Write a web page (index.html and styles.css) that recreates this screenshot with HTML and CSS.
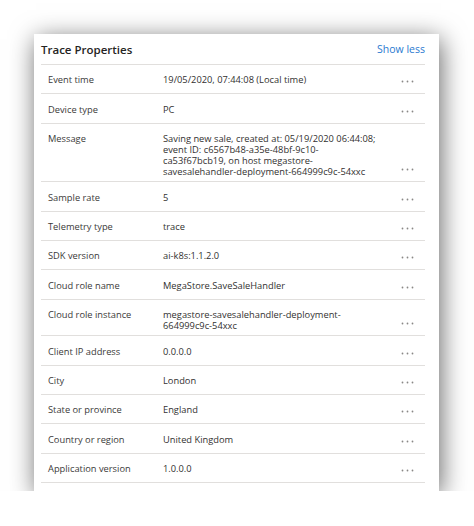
FILE: index.html
```html
<!DOCTYPE html>
<html lang="en">
<head>
<meta charset="utf-8">
<title>Trace Properties</title>
<link rel="stylesheet" href="styles.css">
</head>
<body>
<section class="card">
  <header class="card-head">
    <h2 class="title">Trace Properties</h2>
    <a class="toggle" href="#">Show less</a>
  </header>
  <div class="props">
    <div class="row"><div class="key">Event time</div><div class="val">19/05/2020, 07:44:08 (Local time)</div><button class="more" aria-label="More"><svg width="13" height="3" viewBox="0 0 13 3"><circle cx="1.5" cy="1.5" r="0.9"/><circle cx="6.5" cy="1.5" r="0.9"/><circle cx="11.5" cy="1.5" r="0.9"/></svg></button></div>
    <div class="row"><div class="key">Device type</div><div class="val">PC</div><button class="more" aria-label="More"><svg width="13" height="3" viewBox="0 0 13 3"><circle cx="1.5" cy="1.5" r="0.9"/><circle cx="6.5" cy="1.5" r="0.9"/><circle cx="11.5" cy="1.5" r="0.9"/></svg></button></div>
    <div class="row"><div class="key">Message</div><div class="val">Saving new sale, created at: 05/19/2020 06:44:08; event ID: c6567b48-a35e-48bf-9c10-ca53f67bcb19, on host megastore-savesalehandler-deployment-664999c9c-54xxc</div><button class="more" aria-label="More"><svg width="13" height="3" viewBox="0 0 13 3"><circle cx="1.5" cy="1.5" r="0.9"/><circle cx="6.5" cy="1.5" r="0.9"/><circle cx="11.5" cy="1.5" r="0.9"/></svg></button></div>
    <div class="row"><div class="key">Sample rate</div><div class="val">5</div><button class="more" aria-label="More"><svg width="13" height="3" viewBox="0 0 13 3"><circle cx="1.5" cy="1.5" r="0.9"/><circle cx="6.5" cy="1.5" r="0.9"/><circle cx="11.5" cy="1.5" r="0.9"/></svg></button></div>
    <div class="row"><div class="key">Telemetry type</div><div class="val">trace</div><button class="more" aria-label="More"><svg width="13" height="3" viewBox="0 0 13 3"><circle cx="1.5" cy="1.5" r="0.9"/><circle cx="6.5" cy="1.5" r="0.9"/><circle cx="11.5" cy="1.5" r="0.9"/></svg></button></div>
    <div class="row"><div class="key">SDK version</div><div class="val">ai-k8s:1.1.2.0</div><button class="more" aria-label="More"><svg width="13" height="3" viewBox="0 0 13 3"><circle cx="1.5" cy="1.5" r="0.9"/><circle cx="6.5" cy="1.5" r="0.9"/><circle cx="11.5" cy="1.5" r="0.9"/></svg></button></div>
    <div class="row"><div class="key">Cloud role name</div><div class="val">MegaStore.SaveSaleHandler</div><button class="more" aria-label="More"><svg width="13" height="3" viewBox="0 0 13 3"><circle cx="1.5" cy="1.5" r="0.9"/><circle cx="6.5" cy="1.5" r="0.9"/><circle cx="11.5" cy="1.5" r="0.9"/></svg></button></div>
    <div class="row"><div class="key">Cloud role instance</div><div class="val">megastore-savesalehandler-deployment-664999c9c-54xxc</div><button class="more" aria-label="More"><svg width="13" height="3" viewBox="0 0 13 3"><circle cx="1.5" cy="1.5" r="0.9"/><circle cx="6.5" cy="1.5" r="0.9"/><circle cx="11.5" cy="1.5" r="0.9"/></svg></button></div>
    <div class="row"><div class="key">Client IP address</div><div class="val">0.0.0.0</div><button class="more" aria-label="More"><svg width="13" height="3" viewBox="0 0 13 3"><circle cx="1.5" cy="1.5" r="0.9"/><circle cx="6.5" cy="1.5" r="0.9"/><circle cx="11.5" cy="1.5" r="0.9"/></svg></button></div>
    <div class="row"><div class="key">City</div><div class="val">London</div><button class="more" aria-label="More"><svg width="13" height="3" viewBox="0 0 13 3"><circle cx="1.5" cy="1.5" r="0.9"/><circle cx="6.5" cy="1.5" r="0.9"/><circle cx="11.5" cy="1.5" r="0.9"/></svg></button></div>
    <div class="row"><div class="key">State or province</div><div class="val">England</div><button class="more" aria-label="More"><svg width="13" height="3" viewBox="0 0 13 3"><circle cx="1.5" cy="1.5" r="0.9"/><circle cx="6.5" cy="1.5" r="0.9"/><circle cx="11.5" cy="1.5" r="0.9"/></svg></button></div>
    <div class="row"><div class="key">Country or region</div><div class="val">United Kingdom</div><button class="more" aria-label="More"><svg width="13" height="3" viewBox="0 0 13 3"><circle cx="1.5" cy="1.5" r="0.9"/><circle cx="6.5" cy="1.5" r="0.9"/><circle cx="11.5" cy="1.5" r="0.9"/></svg></button></div>
    <div class="row"><div class="key">Application version</div><div class="val">1.0.0.0</div><button class="more" aria-label="More"><svg width="13" height="3" viewBox="0 0 13 3"><circle cx="1.5" cy="1.5" r="0.9"/><circle cx="6.5" cy="1.5" r="0.9"/><circle cx="11.5" cy="1.5" r="0.9"/></svg></button></div>
  </div>
</section>
</body>
</html>
```
FILE: styles.css
```css
html, body {
  margin: 0;
  padding: 0;
  background: #ffffff;
}

body {
  font-family: "Open Sans", "Noto Sans", sans-serif;
  color: #323130;
  padding: 34px 0 0 34px;
}

.card {
  width: 405px;
  box-sizing: border-box;
  background: #ffffff;
  padding: 0 14px 8px 7px;
  box-shadow: 2px 5px 24px rgba(0, 0, 0, 0.6);
}

.card-head {
  display: flex;
  align-items: center;
  justify-content: space-between;
  height: 30px;
  border-bottom: 1px solid #e1dfdd;
}

.title {
  margin: 0;
  font-size: 11.5px;
  font-weight: 600;
  color: #252423;
}

.toggle {
  font-size: 10.5px;
  color: #2a7ad0;
  text-decoration: none;
}

.props {
  display: flex;
  flex-direction: column;
}

.row {
  display: grid;
  grid-template-columns: 115px 216px 1fr;
  padding: 9.4px 0 4px 7px;
  border-bottom: 1px solid #e1dfdd;
  font-size: 9.3px;
  line-height: 11px;
}

.key {
  color: #3b3a39;
}

.val {
  color: #323130;
}

.more {
  align-self: end;
  justify-self: end;
  margin-right: 11px;
  height: 15px;
  width: 13px;
  padding: 0;
  border: 0;
  background: none;
  display: flex;
  align-items: center;
  justify-content: center;
  fill: #8a8886;
}
```
